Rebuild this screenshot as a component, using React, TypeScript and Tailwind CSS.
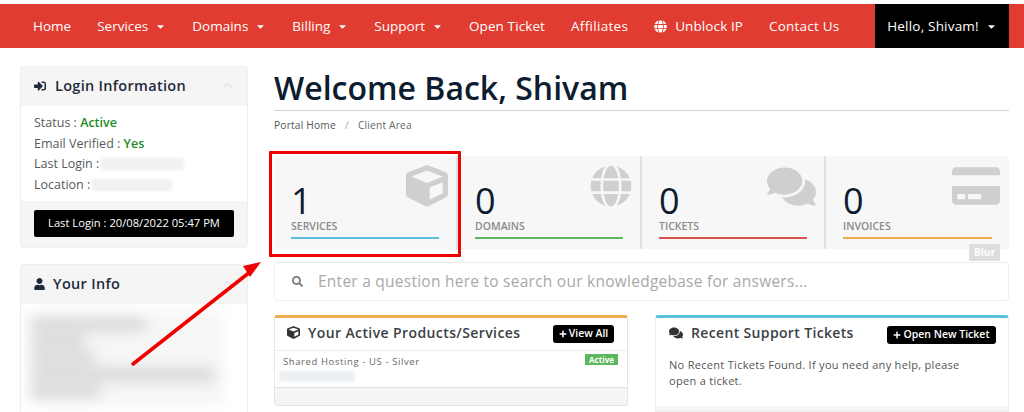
import React from 'react';
import { FaCaretDown, FaComments, FaCreditCard, FaCube, FaGlobe, FaPlus, FaSearch, FaSignInAlt, FaUser, FaChevronUp } from 'react-icons/fa';

const navItems = [
  { label: 'Home' },
  { label: 'Services', caret: true },
  { label: 'Domains', caret: true },
  { label: 'Billing', caret: true },
  { label: 'Support', caret: true },
  { label: 'Open Ticket', cls: 'tracking-[0.1px]' },
  { label: 'Affiliates', cls: 'tracking-[0.3px]' },
  { label: 'Unblock IP', globe: true, cls: 'tracking-[0.1px]' },
  { label: 'Contact Us', cls: 'tracking-[0.2px]' },
];

const stats = [
  { value: '1', label: 'SERVICES', line: 'bg-[#5bc0de]', Icon: FaCube, iconClass: 'w-[42px] h-[42px] right-[8px] top-[9px]' },
  { value: '0', label: 'DOMAINS', line: 'bg-[#5cb85c]', Icon: FaGlobe, iconClass: 'w-[42px] h-[42px] right-[8px] top-[9px]' },
  { value: '0', label: 'TICKETS', line: 'bg-[#d9534f]', Icon: FaComments, iconClass: 'w-[49px] h-[49px] right-[8px] top-[6px]' },
  { value: '0', label: 'INVOICES', line: 'bg-[#f0ad4e]', Icon: FaCreditCard, iconClass: 'w-[48px] h-[48px] right-[9px] top-[6px]' },
];

// Widths of the smudged lines in the "Your Info" box
const blurredLines = ['w-[115px]', 'w-[55px]', 'w-[65px]', 'w-[185px]', 'w-[70px]'];

function Caret() {
  return <FaCaretDown className="ml-[7px] w-[11px] h-[11px] text-white" />;
}

function SideHead({ icon, title }: { icon: React.ReactNode; title: string }) {
  return (
    <div className="h-[39px] pb-[2px] bg-[#f5f5f5] rounded-t-[3px] flex items-center pl-[13px] pr-[14px]">
      {icon}
      <h3 className="text-[14.5px] font-semibold text-[#1f2a3a] tracking-[0.3px]">{title}</h3>
      <FaChevronUp className="ml-auto w-[11px] h-[11px] text-[#e6e6e6]" />
    </div>
  );
}

export default function App() {
  return (
    <div className="relative w-[1024px] h-[412px] overflow-hidden bg-white pt-[4px] font-['Open_Sans',sans-serif]">
      {/* Top nav */}
      <nav className="h-[44px] bg-[#e03c31] flex items-center pl-[20px] pr-[15px] text-[13.5px] text-white">
        <div className="flex items-center flex-1">
          {navItems.map(item => (
            <a key={item.label} className={`flex items-center px-[13px] whitespace-nowrap ${item.cls ?? ''}`}>
              {item.globe && <FaGlobe className="w-[13px] h-[13px] mr-[8px]" />}
              {item.label}
              {item.caret && <Caret />}
            </a>
          ))}
        </div>
        <div className="h-[44px] w-[134px] bg-black flex items-center justify-center tracking-[0.2px]">
          Hello, Shivam!
          <Caret />
        </div>
      </nav>

      <div className="flex pl-[20px] pr-[15px] pt-[18px] gap-[26px]">
        {/* Sidebar */}
        <aside className="w-[228px] shrink-0 flex flex-col gap-[17px]">
          <section className="border border-[#eeeeee] rounded-[3px] shadow-[0_1px_1px_rgba(0,0,0,0.05)]">
            <SideHead icon={<FaSignInAlt className="w-[12px] h-[12px] text-[#1f2a3a] mr-[9px]" />} title="Login Information" />
            <div className="h-[95px] px-[13px] pt-[7px] text-[12.5px] leading-[20.6px] text-[#58595b]">
              <div>Status : <span className="font-semibold text-[#1d8a1d]">Active</span></div>
              <div>Email Verified : <span className="font-semibold text-[#1d8a1d]">Yes</span></div>
              <div className="flex items-center">Last Login : <span className="ml-[2px] w-[83px] h-[12px] bg-[#f1f1f1] blur-[1px]" /></div>
              <div className="flex items-center">Location : <span className="ml-[2px] w-[80px] h-[12px] bg-[#f1f1f1] blur-[1px]" /></div>
            </div>
            <div className="h-[45px] bg-[#f5f5f5] rounded-b-[3px] px-[13px] pt-[9px]">
              <div className="h-[27px] bg-black rounded-[2px] flex items-center justify-center text-[11.2px] text-white">
                Last Login : 20/08/2022 05:47 PM
              </div>
            </div>
          </section>

          <section className="border border-[#eeeeee] rounded-[3px] h-[200px]">
            <SideHead icon={<FaUser className="w-[11px] h-[12px] text-[#1f2a3a] mr-[8px]" />} title="Your Info" />
            <div className="ml-[9px] mr-[24px] mt-[7px] h-[94px] bg-[#f6f6f6] flex flex-col gap-[6px] py-[8px] blur-[7px]">
              {blurredLines.map(w => (
                <div key={w} className={`${w} h-[12px] bg-[#d2d2d2]`} />
              ))}
            </div>
          </section>
        </aside>

        {/* Main column */}
        <main className="flex-1 min-w-0">
          <h1 className="text-[32px] leading-[44px] font-semibold text-[#0e1c30]">Welcome Back, Shivam</h1>
          <div className="border-t border-[#d5d5d5] pt-[7px] flex text-[10.2px] leading-[14px] text-[#555555] tracking-[0.2px]">
            <span>Portal Home</span>
            <span className="mx-[9px] text-[#aaaaaa]">/</span>
            <span className="text-[#666666]">Client Area</span>
          </div>

          <div className="mt-[24px] h-[93px] bg-[#f7f7f7] grid grid-cols-[184px_184px_184px_1fr]">
            {stats.map(({ value, label, line, Icon, iconClass }, i) => (
              <div key={label} className={`relative px-[17px] ${i < 3 ? 'border-r-2 border-[#e1e1e1]' : ''}`}>
                <Icon className={`absolute ${iconClass} text-[#cfcfcf]`} />
                <div className="pt-[27px] text-[36px] leading-[36px] text-[#0e1c30]">{value}</div>
                <div className="text-[10.5px] leading-[14px] font-semibold text-[#8a8a8a]">{label}</div>
                <div className={`mt-[4px] h-[2px] ${line}`} />
              </div>
            ))}
          </div>

          <div className="relative mt-[13px] h-[39px] border border-[#eeeeee] rounded-[4px] flex items-center pl-[17px]">
            <span className="absolute right-[8px] top-[-19px] w-[31px] h-[17px] bg-[#dddddd] text-white text-[10px] font-bold flex items-center justify-center rounded-[1px]">Blur</span>
            <FaSearch className="w-[11px] h-[11px] text-[#777777] mr-[15px]" />
            <span className="text-[15.5px] text-[#a9a9a9] tracking-[0.25px]">Enter a question here to search our knowledgebase for answers...</span>
          </div>

          <div className="mt-[14px] flex justify-between">
            <section className="w-[354px] h-[91px] border border-[#e6e6e6] border-t-[3px] border-t-[#f0ad4e] rounded-[3px] flex flex-col">
              <div className="h-[33px] flex items-center pl-[12px] pr-[13px] border-b border-[#eeeeee] shrink-0">
                <FaCube className="w-[13px] h-[13px] text-[#333333] mr-[8px] mb-[4px]" />
                <h3 className="text-[14px] font-semibold text-[#3a3f46] tracking-[0.4px] pb-[4px]">Your Active Products/Services</h3>
                <span className="ml-auto h-[18px] w-[61px] bg-black rounded-[3px] flex items-center justify-center text-white text-[10.5px] font-semibold">
                  <FaPlus className="w-[8px] h-[8px] mr-[2px]" />View All
                </span>
              </div>
              <div className="h-[37px] px-[8px] pt-[4px] relative shrink-0 border-b border-[#e2e2e2] text-[9.5px] leading-[14px] text-[#666666] tracking-[0.6px]">
                Shared Hosting - US - Silver
                <span className="absolute right-[9px] top-[3px] h-[11px] w-[33px] bg-[#5cb85c] text-white text-[8px] font-bold tracking-normal flex items-center justify-center">Active</span>
                <div className="mt-[2px] ml-[-4px] w-[76px] h-[11px] bg-[#edf1f3] blur-[1px]" />
              </div>
              <div className="flex-1 bg-[#f5f5f5]" />
            </section>

            <section className="w-[354px] h-[97px] border border-[#eeeeee] border-t-[3px] border-t-[#5bc0de] rounded-t-[3px] relative">
              <div className="h-[33px] flex items-center pl-[13px] pr-[12px]">
                <FaComments className="w-[14px] h-[14px] text-[#333333] mr-[8px] mb-[4px]" />
                <h3 className="text-[14px] font-semibold text-[#3a3f46] tracking-[0.35px] pb-[4px]">Recent Support Tickets</h3>
                <span className="ml-auto h-[18px] w-[109px] bg-black rounded-[3px] flex items-center justify-center text-white text-[10.5px] font-semibold">
                  <FaPlus className="w-[8px] h-[8px] mr-[2px]" />Open New Ticket
                </span>
              </div>
              <p className="pl-[13px] pr-[30px] pt-[6px] text-[11px] leading-[16px] text-[#555555] tracking-[0.3px]">
                No Recent Tickets Found. If you need any help, please open a ticket.
              </p>
              <div className="absolute left-0 right-0 bottom-0 h-[5px] bg-[#f5f5f5]" />
            </section>
          </div>
        </main>
      </div>

      {/* Annotation overlay */}
      <div className="absolute left-[269px] top-[151px] w-[192px] h-[106px] border-[3px] border-[#f00000] rounded-[1px]" />
      <svg className="absolute left-[125px] top-[255px]" width="145" height="115" viewBox="0 0 145 115">
        <line x1="8" y1="109" x2="125" y2="17" stroke="#f00000" strokeWidth="3.5" strokeLinecap="round" />
        <polygon points="136,7 118,11 125,22" fill="#f00000" />
      </svg>
    </div>
  );
}
